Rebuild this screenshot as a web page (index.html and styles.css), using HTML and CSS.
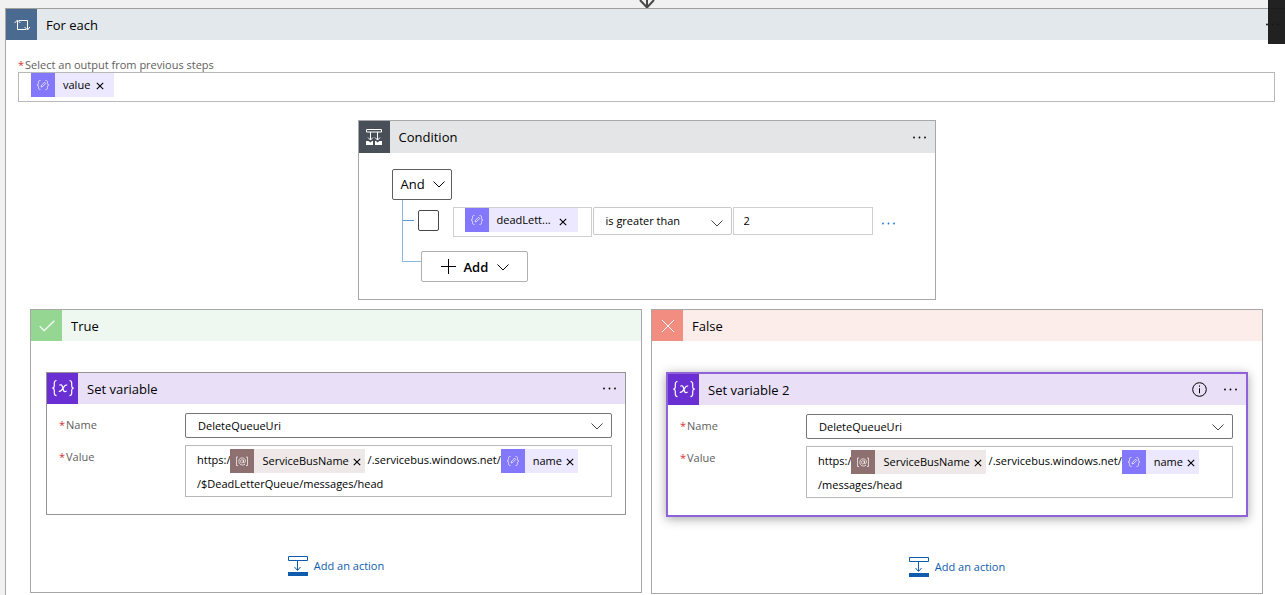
FILE: index.html
```
<!DOCTYPE html>
<html lang="en">
<head>
<meta charset="utf-8">
<title>For each</title>
<link rel="stylesheet" href="styles.css">
</head>
<body>
<svg class="defs" aria-hidden="true">
  <symbol id="chevron" viewBox="0 0 14 8"><path d="M1.500 1.500l5.500 5.500 5.500-5.500" fill="none" stroke="currentColor"/></symbol>
  <symbol id="cross" viewBox="0 0 8 8"><path d="M.8.8l6.400 6.400M7.200.8L.8 7.200" fill="none" stroke="currentColor" stroke-width="1.100"/></symbol>
  <symbol id="dots" viewBox="0 0 15 3"><circle cx="2" cy="1.500" r=".9" fill="currentColor"/><circle cx="7.500" cy="1.500" r=".9" fill="currentColor"/><circle cx="13" cy="1.500" r=".9" fill="currentColor"/></symbol>
  <symbol id="braces" viewBox="0 0 24 24"><path d="M9.500 7.500c-1.800 0-2 .6-2 2 0 1.600-.2 2.300-1.500 2.500 1.300.2 1.500.9 1.500 2.500 0 1.400.2 2 2 2M14.500 7.500c1.800 0 2 .6 2 2 0 1.600.2 2.300 1.500 2.500-1.300.2-1.500.9-1.500 2.500 0 1.400-.2 2-2 2M10 14l.6-1.800 3-3 1.200 1.200-3 3z" fill="none" stroke="currentColor" stroke-width=".7"/></symbol>
  <symbol id="at" viewBox="0 0 24 24"><path d="M8 8H6.500v8.500H8M16 8h1.500v8.500H16M15 15.300c-3 1.700-6.200.2-6.200-3 0-2 1.400-3.500 3.300-3.500s3.300 1.300 3.300 3.200c0 2.200-2 2.600-2 1V10.500M13.400 12c0 2.400-3 2.600-3 .4 0-2.200 3-2.400 3 0" fill="none" stroke="currentColor" stroke-width=".7"/></symbol>
  <symbol id="variable" viewBox="0 0 32 32"><path d="M9.500 7.500c-1.700.2-2.200 1-2.200 2.600v2.800c0 1.400-.6 2-1.900 2.200 1.300.2 1.900.8 1.900 2.200v2.800c0 1.600.5 2.400 2.200 2.600M22.500 7.500c1.700.2 2.200 1 2.200 2.600v2.800c0 1.400.6 2 1.900 2.200-1.300.2-1.900.8-1.900 2.200v2.800c0 1.600-.5 2.400-2.200 2.600M12.300 12.200c1.500-.9 2.500-.4 3 1.100l1.300 4.200c.5 1.500 1.700 1.600 3 .3M20.200 12.300c-1.200-.8-2.300 0-3.900 2.600-1.700 2.700-2.900 4.200-4.500 3.200" fill="none" stroke="currentColor" stroke-width="1.200"/></symbol>
  <symbol id="insert" viewBox="0 0 20 20"><path d="M.5.5h19v4H.5zM9.500 4.500V14M6.500 11l3 3.500 3-3.500" fill="none" stroke="currentColor"/><path d="M0 16h20v4H0z" fill="currentColor"/></symbol>
</svg>

<div class="connector"><svg width="18" height="9" viewBox="0 0 18 9"><path d="M9 0v8M2 0l7 7.500L16 0" fill="none" stroke="#484848" stroke-width="2"/></svg></div>

<main class="card loop">
  <header class="card-head">
    <span class="badge"><svg width="16" height="12" viewBox="0 0 16 12" fill="none" stroke="#fff"><path d="M3.500 1.500v9H12M5 1.500h8.500v9M.6 4L3.500 1l2.900 3M10.600 8l2.900 3 2.400-3"/></svg></span>
    <h1>For each</h1>
    <button class="more" aria-label="For each menu"><svg width="15" height="3"><use href="#dots"/></svg></button>
  </header>
  <div class="loop-body">
    <label class="label" id="out-label"><span class="req">*</span>Select an output from previous steps</label>
    <div class="editor single" role="textbox" aria-labelledby="out-label" tabindex="0">
      <span class="token expr"><svg class="token-icon"><use href="#braces"/></svg><span>value</span><button aria-label="Remove value"><svg width="8" height="8"><use href="#cross"/></svg></button></span>
    </div>

    <section class="card condition">
      <header class="card-head">
        <span class="badge"><svg width="18" height="18" viewBox="0 0 18 18" fill="none" stroke="#fff"><path d="M1.500 1.500h15v2.500h-15zM5.500 4v8M12.500 4v8M3 9.500l2.500 2.500L8 9.500M10 9.500l2.500 2.500 2.500-2.500"/><path d="M1 13h2.500l2 1.500 1.500-1.500h1v4H1zM10 13h1l1.500 1.500 2-1.500H17v4h-7z" fill="#fff" stroke="none"/></svg></span>
        <h2>Condition</h2>
        <button class="more" aria-label="Condition menu"><svg width="15" height="3"><use href="#dots"/></svg></button>
      </header>
      <div class="condition-body">
        <button class="and">And <svg width="14" height="8"><use href="#chevron"/></svg></button>
        <div class="rule">
          <span class="stub"></span>
          <input type="checkbox" aria-label="Select row">
          <div class="operand" role="textbox" aria-label="Left value" tabindex="0">
            <span class="token expr"><svg class="token-icon"><use href="#braces"/></svg><span>deadLett...</span><button aria-label="Remove deadLetter"><svg width="8" height="8"><use href="#cross"/></svg></button></span>
          </div>
          <div class="combo operator">
            <select aria-label="Operator"><option>is greater than</option></select>
            <svg width="14" height="8"><use href="#chevron"/></svg>
          </div>
          <input class="operand-text" type="text" value="2" aria-label="Right value">
          <button class="more blue" aria-label="Row menu"><svg width="15" height="3"><use href="#dots"/></svg></button>
        </div>
        <div class="add-row">
          <span class="elbow"></span>
          <button class="add"><svg width="15" height="15" viewBox="0 0 15 15"><path d="M7.500 0v15M0 7.500h15" stroke="currentColor"/></svg>Add<svg width="14" height="8"><use href="#chevron"/></svg></button>
        </div>
      </div>
    </section>

    <div class="branches">
      <section class="card branch yes">
        <header class="card-head">
          <span class="badge"><svg width="16" height="12" viewBox="0 0 16 12"><path d="M.7 6.200l4.500 4.500L15.300.7" fill="none" stroke="#fff" stroke-width="1.200"/></svg></span>
          <h2>True</h2>
        </header>
        <div class="branch-body">
          <article class="card action">
            <header class="card-head">
              <span class="badge"><svg width="32" height="32"><use href="#variable"/></svg></span>
              <h3>Set variable</h3>
              <button class="more" aria-label="Set variable menu"><svg width="15" height="3"><use href="#dots"/></svg></button>
            </header>
            <div class="fields">
              <label class="label" for="name1"><span class="req">*</span>Name</label>
              <div class="combo">
                <select id="name1"><option>DeleteQueueUri</option></select>
                <svg width="14" height="8"><use href="#chevron"/></svg>
              </div>
              <label class="label" id="value1"><span class="req">*</span>Value</label>
              <div class="editor" role="textbox" aria-labelledby="value1" tabindex="0">https:/<span class="token param"><svg class="token-icon"><use href="#at"/></svg><span>ServiceBusName</span><button aria-label="Remove ServiceBusName"><svg width="8" height="8"><use href="#cross"/></svg></button></span> /.servicebus.windows.net/<span class="token expr"><svg class="token-icon"><use href="#braces"/></svg><span>name</span><button aria-label="Remove name"><svg width="8" height="8"><use href="#cross"/></svg></button></span><br>/$DeadLetterQueue/messages/head</div>
            </div>
          </article>
          <button class="add-action"><svg width="20" height="20"><use href="#insert"/></svg>Add an action</button>
        </div>
      </section>

      <section class="card branch no">
        <header class="card-head">
          <span class="badge"><svg width="14" height="14" viewBox="0 0 14 14"><path d="M1 1l12 12M13 1L1 13" fill="none" stroke="#fff"/></svg></span>
          <h2>False</h2>
        </header>
        <div class="branch-body">
          <article class="card action selected">
            <header class="card-head">
              <span class="badge"><svg width="32" height="32"><use href="#variable"/></svg></span>
              <h3>Set variable 2</h3>
              <button class="info" aria-label="Information"><svg width="15" height="15" viewBox="0 0 15 15"><circle cx="7.500" cy="7.500" r="6.800" fill="none" stroke="currentColor"/><path d="M7 3.500h1v1.300H7zM7 6.200h1v5H7z" fill="currentColor"/></svg></button>
              <button class="more" aria-label="Set variable 2 menu"><svg width="15" height="3"><use href="#dots"/></svg></button>
            </header>
            <div class="fields">
              <label class="label" for="name2"><span class="req">*</span>Name</label>
              <div class="combo">
                <select id="name2"><option>DeleteQueueUri</option></select>
                <svg width="14" height="8"><use href="#chevron"/></svg>
              </div>
              <label class="label" id="value2"><span class="req">*</span>Value</label>
              <div class="editor" role="textbox" aria-labelledby="value2" tabindex="0">https:/<span class="token param"><svg class="token-icon"><use href="#at"/></svg><span>ServiceBusName</span><button aria-label="Remove ServiceBusName"><svg width="8" height="8"><use href="#cross"/></svg></button></span> /.servicebus.windows.net/<span class="token expr"><svg class="token-icon"><use href="#braces"/></svg><span>name</span><button aria-label="Remove name"><svg width="8" height="8"><use href="#cross"/></svg></button></span><br>/messages/head</div>
            </div>
          </article>
          <button class="add-action"><svg width="20" height="20"><use href="#insert"/></svg>Add an action</button>
        </div>
      </section>
    </div>
  </div>
</main>
<div class="corner"></div>
</body>
</html>
```

FILE: styles.css
```
* { box-sizing: border-box; }

body {
  display: flex;
  flex-direction: column;
  margin: 0;
  min-height: 100vh;
  overflow: hidden;
  background: #f1f1f1;
  color: #000;
  font: 11px/16px "Open Sans", sans-serif;
}

button, input, select { font: inherit; color: inherit; }
button { padding: 0; border: 0; background: none; cursor: pointer; }
svg { display: block; flex: none; }
.defs { position: absolute; width: 0; height: 0; }

.connector { display: flex; justify-content: center; height: 8px; padding-left: 8px; }

.card { background: #fff; border: 1px solid #a8a8a8; }
.card-head { display: flex; align-items: center; height: 31px; padding-right: 8px; }
.card-head h1, .card-head h2, .card-head h3 {
  flex: 1;
  margin: 0 0 0 9px;
  font-size: 13px;
  font-weight: 400;
  line-height: 20px;
}
.badge {
  display: flex;
  align-items: center;
  justify-content: center;
  align-self: stretch;
  width: 31px;
  color: #fff;
  overflow: hidden;
}

.loop { flex: 1; margin-left: 5px; border-width: 1px 0 0 1px; border-top-color: #a19f9d; }
.loop > .card-head { background: #e3e8ec; padding-right: 5px; }
.loop > .card-head .badge { background: #4a6a8f; }
.loop-body { padding: 17px 10px 0 12px; }

.label { display: flex; color: #605e5c; }
.loop-body > .label { line-height: 15px; }
.req { color: #d13438; padding-right: 1px; }

.editor {
  min-height: 52px;
  padding: 3px 0 0 11px;
  border: 1px solid #b8b8b8;
  line-height: 22px;
}
.editor.single { min-height: 30px; padding: 0 12px; }

.token { display: inline-flex; align-items: center; height: 24px; vertical-align: middle; line-height: 24px; }
.token-icon { width: 24px; height: 24px; margin-right: 8px; color: #fff; }
.token button { padding: 2px 4px 0; }
.expr { background: #ebe8ff; }
.expr .token-icon { background: #8378fb; }
.param { background: #eee9e8; }
.param .token-icon { background: #8f7070; }
.single .token button { padding: 2px 10px 0 6px; }

.condition { width: 578px; margin: 18px auto 0; }
.condition > .card-head { height: 32px; background: #e4e5e6; }
.condition > .card-head .badge { background: #484f58; }
.condition-body { padding: 16px 33px 17px; }

.and {
  display: flex;
  align-items: center;
  gap: 7px;
  height: 31px;
  padding: 0 5px 1px 8px;
  border: 1px solid #605e5c;
  border-radius: 2px;
  font-size: 13px;
  background: #fff;
}
.rule { display: flex; margin-left: 10px; padding: 7px 0 14px; border-left: 1px solid #8db6de; }
.stub { width: 11px; height: 1px; margin: 13px 4px 0 0; background: #5b9bd5; }
.rule input[type="checkbox"] {
  appearance: none;
  width: 21px;
  height: 21px;
  margin: 3px 14px 0 0;
  border: 1px solid #484644;
  border-radius: 2px;
}
.operand { width: 139px; height: 30px; padding-left: 11px; border: 1px solid #d0d0d0; }
.operand .token button { padding: 4px 11px 0 8px; }
.operator { width: 139px; margin-left: 1px; }
.operand-text { width: 140px; height: 28px; margin-left: 1px; padding: 0 10px 2px; border: 1px solid #d0d0d0; }
.rule .more { height: 28px; margin-left: 8px; padding-top: 4px; }
.blue { color: #1a73d4; }

.add-row { display: flex; margin-left: 10px; }
.elbow { width: 19px; height: 11px; border: solid #8db6de; border-width: 0 0 1px 1px; }
.add {
  display: flex;
  align-items: center;
  gap: 8px;
  height: 31px;
  padding: 0 17px 0 19px;
  border: 1px solid #b0b0b0;
  border-radius: 2px;
  font-size: 13px;
  font-weight: 600;
  background: #fff;
}

.combo { position: relative; }
.combo select {
  display: block;
  appearance: none;
  width: 100%;
  height: 25px;
  padding: 0 28px 0 12px;
  border: 1px solid #767676;
  border-radius: 2px;
  background: #fff;
}
.combo svg { position: absolute; right: 8px; top: 9px; pointer-events: none; color: #484644; }
.operator select { height: 28px; border-color: #c8c8c8; }
.operator svg { top: 12px; }

.branches {
  display: grid;
  grid-template-columns: 1fr 1fr;
  align-items: start;
  gap: 9px;
  padding: 9px 12px 0;
}
.branch-body { padding: 31px 15px 16px; }
.yes > .card-head { background: #eff8f0; }
.yes > .card-head .badge { background: #96d693; }
.no > .card-head { background: #fdedea; }
.no > .card-head .badge { background: #f28d82; }

.action { border-color: #979593; }
.action > .card-head { background: #e9dff7; }
.action > .card-head .badge { background: #692fd2; }
.selected {
  margin: 0 -1px -1px;
  border: 2px solid #8f62d9;
  box-shadow: 0 2px 10px rgba(0, 0, 0, .35);
}
.fields {
  display: grid;
  grid-template-columns: 126px 1fr;
  row-gap: 7px;
  padding: 9px 13px 17px 12px;
}
.fields .label { padding-top: 4px; }
.info { margin-right: 16px; }

.add-action {
  display: flex;
  align-items: center;
  gap: 6px;
  margin: 41px auto 0;
  color: #0f5cac;
}

.corner {
  position: fixed;
  top: 0;
  right: 0;
  width: 17px;
  height: 44px;
  background: rgba(20, 20, 20, .94);
}
```
